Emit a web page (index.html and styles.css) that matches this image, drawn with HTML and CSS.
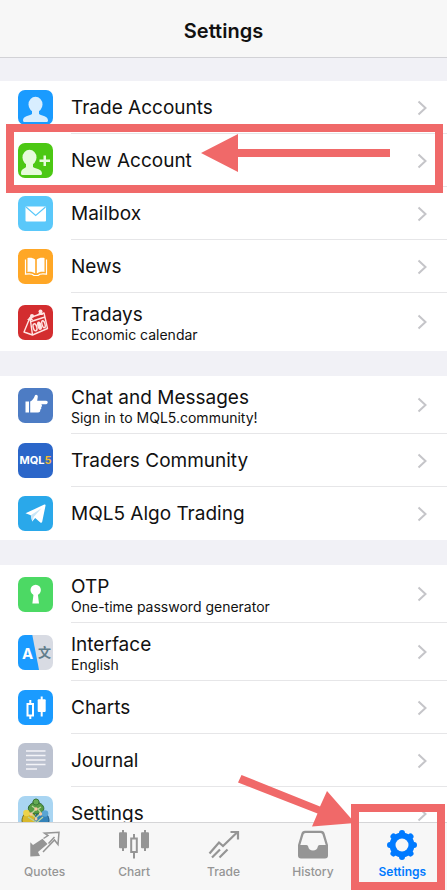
FILE: index.html
```
<!DOCTYPE html>
<html lang="en">
<head>
  <meta charset="UTF-8" />
  <meta name="viewport" content="width=device-width, initial-scale=1.0"/>
  <title>Settings</title>
  <link rel="stylesheet" href="styles.css">
</head>
<body>
  <div class="app">
    <header class="header">
      <h1>Settings</h1>
    </header>

    <main class="content">
      <!-- Accounts -->
      <ul class="group">
        <li class="row">
          <a href="#accounts">
            <svg class="tile blue" viewBox="0 0 35 35"><g fill="#d8eeff"><ellipse cx="17.5" cy="14.5" rx="7" ry="7.8"/><path d="M14 20h7v4c3 2 9 2 9 6.500q0 1.500-1.500 1.500h-22q-1.500 0-1.500-1.500c0-4.500 6-4.500 9-6.500z"/></g></svg>
            <span class="text"><span class="title">Trade Accounts</span></span>
            <svg class="chevron" viewBox="0 0 10 16"><path d="M1.500 1.500l7 6.500-7 6.500"/></svg>
          </a>
        </li>
        <li class="row marked">
          <a href="#new-account">
            <svg class="tile green" viewBox="0 0 35 35"><g fill="#e6fbdc"><ellipse cx="11.500" cy="14.500" rx="7" ry="7.800"/><path d="M8 20h7v4c3 2 9 2 9 6.500q0 1.500-1.500 1.500h-18q-1.500 0-1.500-1.500c0-4.500 3-4.500 5-6.500z"/><path d="M25.500 12.500h2.500v4h4v2.500h-4v4h-2.500v-4h-4v-2.500h4z"/></g></svg>
            <span class="text"><span class="title">New Account</span></span>
            <svg class="chevron" viewBox="0 0 10 16"><path d="M1.500 1.500l7 6.500-7 6.500"/></svg>
          </a>
          <svg class="arrow arrow-row" viewBox="0 0 189 38"><path d="M0 19L37 0v15h152v8H37v15z"/></svg>
        </li>
        <li class="row">
          <a href="#mailbox">
            <svg class="tile sky" viewBox="0 0 35 35"><rect x="7.500" y="10.500" width="20.500" height="15" rx="1" fill="#fff"/><path d="M8 11l9.700 8.500L27.500 11" fill="none" stroke="#5ac8fa" stroke-width="1.200"/></svg>
            <span class="text"><span class="title">Mailbox</span></span>
            <svg class="chevron" viewBox="0 0 10 16"><path d="M1.500 1.500l7 6.500-7 6.500"/></svg>
          </a>
        </li>
        <li class="row">
          <a href="#news">
            <svg class="tile orange" viewBox="0 0 35 35"><path d="M9.500 9c3-.5 6 0 7.700 1.500v14C15 23 12.500 22.500 9.500 23zM26.500 9c-3-.5-6 0-7.700 1.500v14c2.200-1.500 4.700-2 7.700-1.500z" fill="#fff"/><path d="M7.500 10.500v14.700c4-.7 7-.3 8.500 1.300h4c1.500-1.600 4.500-2 8.500-1.300V10.500" fill="none" stroke="#fff" stroke-width="1.200"/></svg>
            <span class="text"><span class="title">News</span></span>
            <svg class="chevron" viewBox="0 0 10 16"><path d="M1.500 1.500l7 6.500-7 6.500"/></svg>
          </a>
        </li>
        <li class="row tall">
          <a href="#tradays">
            <svg class="tile red" viewBox="0 0 35 35"><g fill="none" stroke="#ffe4e2" stroke-width="1.400" stroke-linejoin="round"><path d="M12 12.500L26 8l3.500 15.500-15 6.500zM12 12.500L6 27l8.500 3M13 16.500L27 12"/><ellipse cx="17" cy="22.300" rx="1.800" ry="3.600" transform="rotate(-15 17 22.300)"/><ellipse cx="21.500" cy="20.700" rx="1.500" ry="3.600" fill="#ffe4e2" transform="rotate(-15 21.500 20.700)"/><ellipse cx="25.500" cy="19.200" rx="1.500" ry="3.600" transform="rotate(-15 25.500 19.200)"/></g><g fill="#ffe4e2"><circle cx="14" cy="11" r="2"/><circle cx="22.500" cy="6.500" r="2"/><path d="M9 15l4-4 2 4zM19 10l4-4 2 4z"/></g></svg>
            <span class="text"><span class="title">Tradays</span><span class="sub">Economic calendar</span></span>
            <svg class="chevron" viewBox="0 0 10 16"><path d="M1.500 1.500l7 6.500-7 6.500"/></svg>
          </a>
        </li>
      </ul>

      <!-- Community -->
      <ul class="group">
        <li class="row tall">
          <a href="#chat">
            <svg class="tile steel" viewBox="0 0 35 35"><path d="M7.500 13.500H11v11H7.500zM12.200 13.500c2.500-1.500 3.800-3.200 4.600-5.800.5-1.700 3.200-1.200 3 1.100l-.6 4h8.900c2.200 0 2.200 3.400 0 3.400h-4.700c1 1.200.6 2.400-.3 2.900.6 1.300 0 2.300-.9 2.600.3 1.700-.5 2.800-2.200 2.800h-7.800z" fill="#fff"/></svg>
            <span class="text"><span class="title">Chat and Messages</span><span class="sub">Sign in to MQL5.community!</span></span>
            <svg class="chevron" viewBox="0 0 10 16"><path d="M1.500 1.500l7 6.500-7 6.500"/></svg>
          </a>
        </li>
        <li class="row">
          <a href="#community">
            <svg class="tile royal" viewBox="0 0 35 35"><text class="logo" x="17.500" y="21" text-anchor="middle">MQL<tspan fill="#f5b92d">5</tspan></text></svg>
            <span class="text"><span class="title">Traders Community</span></span>
            <svg class="chevron" viewBox="0 0 10 16"><path d="M1.500 1.500l7 6.500-7 6.500"/></svg>
          </a>
        </li>
        <li class="row">
          <a href="#algo">
            <svg class="tile telegram" viewBox="0 0 35 35"><path d="M7.500 17.300L26.300 8.600q1.500-.5 1.200 1.100l-3.300 16.100q-.5 1.500-1.900.6L17.200 22l-3 3.500-1.400-6.300z" fill="#fff"/><path d="M12.800 19.200l10.700-7-7.700 8.600-1.600 4.700" fill="#c8e6f7"/></svg>
            <span class="text"><span class="title">MQL5 Algo Trading</span></span>
            <svg class="chevron" viewBox="0 0 10 16"><path d="M1.500 1.500l7 6.500-7 6.500"/></svg>
          </a>
        </li>
      </ul>

      <!-- Application -->
      <ul class="group">
        <li class="row tall">
          <a href="#otp">
            <svg class="tile mint" viewBox="0 0 35 35"><circle cx="17.700" cy="13" r="5.200" fill="#fff"/><path d="M15.700 16h4l1.300 10.500h-6.600z" fill="#fff"/></svg>
            <span class="text"><span class="title">OTP</span><span class="sub">One-time password generator</span></span>
            <svg class="chevron" viewBox="0 0 10 16"><path d="M1.500 1.500l7 6.500-7 6.500"/></svg>
          </a>
        </li>
        <li class="row tall">
          <a href="#interface">
            <svg class="tile silver" viewBox="0 0 35 35"><path d="M0 0h14.300L21 35H0z" fill="#1a9bff"/><text class="letter" x="9.500" y="23.500" text-anchor="middle">A</text><text class="hanzi" x="26.500" y="22" text-anchor="middle">文</text></svg>
            <span class="text"><span class="title">Interface</span><span class="sub">English</span></span>
            <svg class="chevron" viewBox="0 0 10 16"><path d="M1.500 1.500l7 6.500-7 6.500"/></svg>
          </a>
        </li>
        <li class="row">
          <a href="#charts">
            <svg class="tile blue" viewBox="0 0 35 35"><g fill="#fff"><path d="M11.300 10h2v4h-2zM11.300 25h2v4h-2zM22.700 6.500h2v20h-2z"/><rect x="19.700" y="9.300" width="8" height="12.700" rx="1"/></g><rect x="9.500" y="14" width="5.500" height="11.500" fill="none" stroke="#fff" stroke-width="2"/></svg>
            <span class="text"><span class="title">Charts</span></span>
            <svg class="chevron" viewBox="0 0 10 16"><path d="M1.500 1.500l7 6.500-7 6.500"/></svg>
          </a>
        </li>
        <li class="row">
          <a href="#journal">
            <svg class="tile gray" viewBox="0 0 35 35"><path d="M8 8h19.500M8 12.500h19.500M8 17h19.500M8 21.500h19.500M8 26h11" stroke="#f3f4f8" stroke-width="1.500"/></svg>
            <span class="text"><span class="title">Journal</span></span>
            <svg class="chevron" viewBox="0 0 10 16"><path d="M1.500 1.500l7 6.500-7 6.500"/></svg>
          </a>
        </li>
        <li class="row">
          <a href="#settings">
            <svg class="tile pale" viewBox="0 0 35 35"><path d="M4 25c0-5 3-9 7-9 5 0 8 4 8 12H6q-2-1-2-3z" fill="#d9b92c" stroke="#75701f"/><path d="M31 25c0-5-3-9-7-9-5 0-8 4-7 12h12q2-1 2-3z" fill="#3483b9" stroke="#1e567f"/><path d="M11 15c-2-4 1-7 4-8 0-5 6-5 6 0 4 1 6 5 4 8-3 4-11 4-14 0z" fill="#579b43" stroke="#2c672f"/><circle cx="18" cy="6" r="3" fill="#65aa54" stroke="#2c672f" stroke-width=".7"/><circle cx="8.500" cy="17" r="3.300" fill="#ecd34a"/><circle cx="27" cy="17.500" r="3.300" fill="#5aa5d3"/><path d="M14 10l4 3-5 5 5 4 5-5-3-4 3-2M10 21l8 5M25 21l-7 6" fill="none" stroke="#b9d49a" stroke-width="1.300"/><g fill="#f8c7a0"><circle cx="18" cy="13" r="1.700"/><circle cx="13" cy="18" r="1.700"/><circle cx="22.500" cy="18" r="1.700"/><circle cx="18" cy="23" r="1.500"/></g></svg>
            <span class="text"><span class="title">Settings</span></span>
            <svg class="chevron" viewBox="0 0 10 16"><path d="M1.500 1.500l7 6.500-7 6.500"/></svg>
          </a>
        </li>
      </ul>
    </main>

    <nav class="tabbar">
      <a class="tab" href="#quotes">
        <svg viewBox="0 0 30 30"><path d="M.3 12.300L3 15l9.500-6.300 5 5.300-9.500 8 2 4L.3 26.500z" fill="currentColor"/><path d="M13.500 8.500l4.500-3-3.500-2.300 14.500-1-1 12.300-3.500-4.500L13 22M18.500 13.500L24.500 7" fill="none" stroke="currentColor" stroke-width="1.500"/></svg>
        <span>Quotes</span>
      </a>
      <a class="tab" href="#chart">
        <svg viewBox="0 0 30 30"><g fill="currentColor"><rect x="0" y="2.300" width="8" height="16" rx="1"/><rect x="22" y="2.300" width="8" height="16" rx="1"/><path d="M3 0h2v21H3zM25 0h2v21h-2zM14 4h2v4h-2zM14 22h2v6.500h-2z"/></g><rect x="12.200" y="8.500" width="5.600" height="13.500" fill="none" stroke="currentColor" stroke-width="2"/></svg>
        <span>Chart</span>
      </a>
      <a class="tab" href="#trade">
        <svg viewBox="0 0 30 30"><path d="M.5 23.500l9.500-11 4 3.500L28 2.500M21.500 2H29v7.500M3 27.500l8-8M10.500 27.500l8-8" fill="none" stroke="currentColor" stroke-width="2.200"/></svg>
        <span>Trade</span>
      </a>
      <a class="tab" href="#history">
        <svg viewBox="0 0 30 30"><path fill-rule="evenodd" d="M7 .7h16q3 0 3.700 3L30 15v10.500q0 3-3 3H3q-3 0-3-3V15L3.300 3.700Q4 .7 7 .7zM7.500 3q-1.600 0-2 1.500L2.300 15h6.200q1.500 0 1.700 1.500c.3 2.500 2.200 4 4.800 4s4.500-1.500 4.800-4q.2-1.500 1.700-1.500h6.200L24.500 4.500q-.4-1.500-2-1.500z" fill="currentColor"/></svg>
        <span>History</span>
      </a>
      <a class="tab active" href="#settings">
        <svg viewBox="0 0 30 30"><circle cx="15" cy="15" r="9.500" fill="none" stroke="currentColor" stroke-width="6"/><path d="M15 3v24M3 15h24M6.500 6.500l17 17M23.500 6.500l-17 17" stroke="currentColor" stroke-width="6" stroke-linecap="round"/><circle cx="15" cy="15" r="6.500" fill="#f7f7f7"/></svg>
        <span>Settings</span>
        <svg class="arrow arrow-tab" viewBox="0 0 118 56"><path d="M3.500 1L82 32.500 89 17l28 32-43 3.500 5.500-13L0 8.500z"/></svg>
      </a>
    </nav>
  </div>
</body>
</html>
```
FILE: styles.css
```
* {
  box-sizing: border-box;
}
body {
  margin: 0;
  font-family: Inter, "Liberation Sans", "Noto Sans CJK SC", sans-serif;
  background-color: #f1f1f6;
  color: #111;
}
a {
  color: inherit;
  text-decoration: none;
}
.app {
  display: flex;
  flex-direction: column;
  height: 100vh;
}
.header {
  display: flex;
  flex: none;
  align-items: center;
  justify-content: center;
  padding: 18px 16px 13px;
  background-color: #f7f7f7;
  border-bottom: 1px solid #d2d2d6;
}
h1 {
  margin: 0;
  font-size: 20px;
  line-height: 26px;
  font-weight: 600;
}
.content {
  flex: 1;
  min-height: 0;
  padding-top: 23px;
  overflow-y: auto;
  scrollbar-width: none;
}
.group {
  margin: 0 0 25px;
  padding: 0;
  list-style: none;
  background-color: #fff;
}
.row {
  position: relative;
}
.row a {
  display: flex;
  align-items: center;
  height: 53px;
  padding: 0 20px 0 18px;
}
.row.tall a {
  height: 58px;
}
.row.tall .text {
  padding-top: 2px;
}
.row:not(:last-child)::after {
  content: "";
  position: absolute;
  left: 71px;
  right: 0;
  bottom: 0;
  border-bottom: 1px solid #e6e6e8;
}
.text {
  display: flex;
  flex: 1;
  flex-direction: column;
  margin-left: 18px;
}
.title {
  font-size: 19px;
  line-height: 24px;
}
.sub {
  font-size: 14px;
  line-height: 16px;
}
.chevron {
  width: 10px;
  height: 16px;
  fill: none;
  stroke: #c5c5c9;
  stroke-width: 2;
}

/* icon tiles */
.tile {
  width: 35px;
  height: 35px;
  border-radius: 7px;
}
.blue { background-color: #1a9bff; }
.green { background-color: #4cc814; }
.sky { background-color: #5ac8fa; }
.orange { background-color: #ffa726; }
.red { background-color: #d32d2f; }
.steel { background-color: #4d7cc4; }
.royal { background-color: #2b66c9; }
.telegram { background-color: #2aa8ea; }
.mint { background-color: #4cd964; }
.silver { background-color: #d8dbe3; }
.gray { background-color: #bcc2d0; }
.pale { background-color: #a9d5f2; }
.logo {
  font-size: 11px;
  font-weight: 700;
  fill: #fff;
}
.letter {
  font-size: 15px;
  font-weight: 700;
  fill: #fff;
}
.hanzi {
  font-family: "Noto Sans CJK SC", sans-serif;
  font-size: 13px;
  font-weight: 700;
  fill: #607d8b;
}

/* bottom tabs */
.tabbar {
  position: relative;
  display: flex;
  flex: none;
  background-color: #f7f7f7;
  border-top: 1px solid #d5d5d7;
}
.tab {
  position: relative;
  display: flex;
  flex: 1;
  flex-direction: column;
  align-items: center;
  gap: 4px;
  padding: 7px 0 10px;
  font-size: 12px;
  line-height: 16px;
  font-weight: 500;
  color: #959595;
}
.tab > svg:first-child {
  width: 30px;
  height: 30px;
  overflow: visible;
}
.tab.active {
  font-weight: 600;
  color: #007aff;
}

/* red callouts */
.marked::before,
.tab.active::before {
  content: "";
  position: absolute;
  z-index: 1;
  border: 8px solid #f06969;
  pointer-events: none;
}
.marked::before {
  inset: -10px 4px -6px 6px;
}
.tab.active::before {
  inset: -19px 2px 0 -7px;
}
.arrow {
  position: absolute;
  z-index: 2;
  fill: #f06969;
  pointer-events: none;
}
.arrow-row {
  width: 189px;
  height: 38px;
  right: 57px;
  top: 0;
}
.arrow-tab {
  width: 118px;
  height: 56px;
  right: 91px;
  top: -49px;
}
```
